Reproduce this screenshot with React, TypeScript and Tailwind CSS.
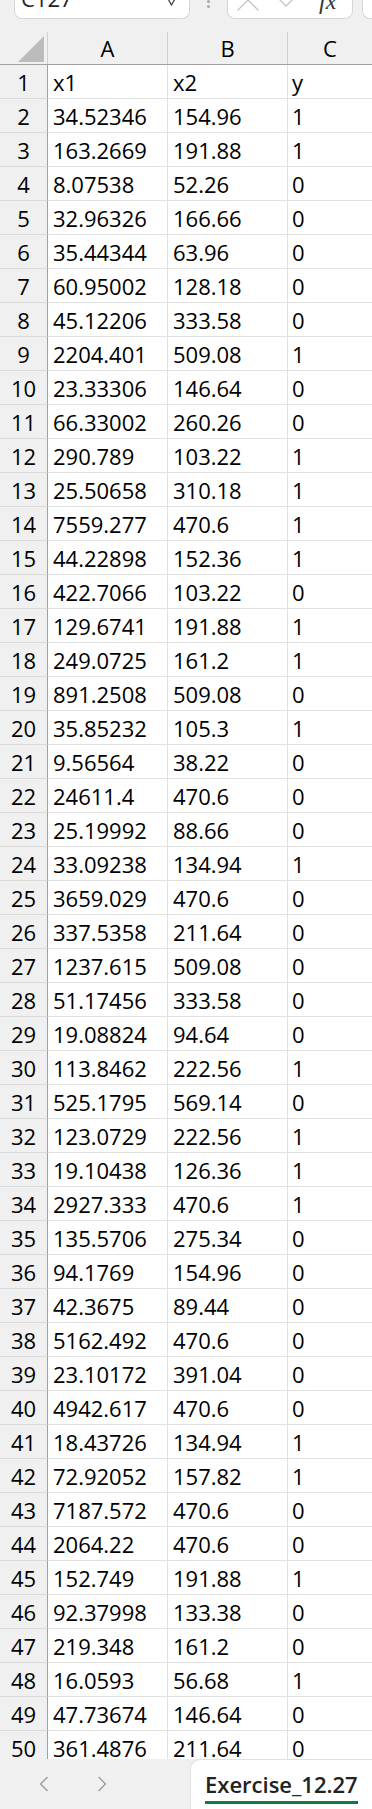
import React from 'react';

const rows: [string, string, string][] = [
  ['x1', 'x2', 'y'],
  ['34.52346', '154.96', '1'],
  ['163.2669', '191.88', '1'],
  ['8.07538', '52.26', '0'],
  ['32.96326', '166.66', '0'],
  ['35.44344', '63.96', '0'],
  ['60.95002', '128.18', '0'],
  ['45.12206', '333.58', '0'],
  ['2204.401', '509.08', '1'],
  ['23.33306', '146.64', '0'],
  ['66.33002', '260.26', '0'],
  ['290.789', '103.22', '1'],
  ['25.50658', '310.18', '1'],
  ['7559.277', '470.6', '1'],
  ['44.22898', '152.36', '1'],
  ['422.7066', '103.22', '0'],
  ['129.6741', '191.88', '1'],
  ['249.0725', '161.2', '1'],
  ['891.2508', '509.08', '0'],
  ['35.85232', '105.3', '1'],
  ['9.56564', '38.22', '0'],
  ['24611.4', '470.6', '0'],
  ['25.19992', '88.66', '0'],
  ['33.09238', '134.94', '1'],
  ['3659.029', '470.6', '0'],
  ['337.5358', '211.64', '0'],
  ['1237.615', '509.08', '0'],
  ['51.17456', '333.58', '0'],
  ['19.08824', '94.64', '0'],
  ['113.8462', '222.56', '1'],
  ['525.1795', '569.14', '0'],
  ['123.0729', '222.56', '1'],
  ['19.10438', '126.36', '1'],
  ['2927.333', '470.6', '1'],
  ['135.5706', '275.34', '0'],
  ['94.1769', '154.96', '0'],
  ['42.3675', '89.44', '0'],
  ['5162.492', '470.6', '0'],
  ['23.10172', '391.04', '0'],
  ['4942.617', '470.6', '0'],
  ['18.43726', '134.94', '1'],
  ['72.92052', '157.82', '1'],
  ['7187.572', '470.6', '0'],
  ['2064.22', '470.6', '0'],
  ['152.749', '191.88', '1'],
  ['92.37998', '133.38', '0'],
  ['219.348', '161.2', '0'],
  ['16.0593', '56.68', '1'],
  ['47.73674', '146.64', '0'],
  ['361.4876', '211.64', '0'],
];

// small stroked chevron, path given in the svg's own box
const Stroke = ({ w, h, d, className }: { w: number; h: number; d: string; className?: string }) => (
  <svg
    width={w}
    height={h}
    viewBox={`0 0 ${w} ${h}`}
    className={className}
    fill="none"
    stroke="currentColor"
    strokeWidth={1.3}
  >
    <path d={d} />
  </svg>
);

export default function App() {
  return (
    <div
      className="w-[372px] h-[1809px] flex flex-col overflow-hidden bg-[#f0f0f0] text-black"
      style={{ fontFamily: '"Open Sans", "Noto Sans", sans-serif' }}
    >
      {/* formula bar */}
      <div className="h-[32px] shrink-0 flex items-start">
        <div className="ml-[14px] w-[176px] h-[19px] bg-white border border-t-0 border-[#d6d6d6] rounded-b-[8px] flex items-start overflow-hidden pl-[6px]">
          <span className="text-[22px] leading-none text-[#222] -mt-[13px]">C127</span>
          <Stroke w={11} h={6} d="M0.5 -4 L5.5 5 L10.5 -4" className="ml-auto mr-[12px] text-[#444]" />
        </div>
        <div className="w-[37px] flex flex-col items-center gap-[2px] text-[#a0a0a0]">
          <span className="w-[3px] h-[3px] rounded-full bg-[#a8a8a8]" />
          <span className="w-[3px] h-[3px] rounded-full bg-[#a8a8a8]" />
        </div>
        <div className="w-[126px] h-[19px] bg-white border border-t-0 border-[#d6d6d6] rounded-b-[8px] flex items-start overflow-hidden pl-[9px]">
          <Stroke w={22} h={11} d="M0.5 10.5 L11 0 L21.5 10.5" className="text-[#c4c4c4]" />
          <Stroke w={20} h={7} d="M0.5 -3.5 L10 6 L19.5 -3.5" className="ml-[17px] text-[#c4c4c4]" />
          <span
            className="ml-[23px] text-[24px] italic leading-none text-[#333] -mt-[11px]"
            style={{ fontFamily: '"Liberation Serif", serif' }}
          >
            fx
          </span>
        </div>
        <div className="ml-[9px] flex-1 h-[19px] bg-white border border-t-0 border-r-0 border-[#d6d6d6] rounded-bl-[8px]" />
      </div>

      {/* column headers */}
      <div className="h-[33px] shrink-0 flex border-b border-[#a0a0a0]">
        <div className="w-[48px] shrink-0 border-r border-[#d0d0d0] flex items-end justify-start pl-[18px] pb-[2px]">
          <svg viewBox="0 0 26 26" className="w-[26px] h-[26px]">
            <polygon points="26,0 26,26 0,26" fill="#bcbcbc" />
          </svg>
        </div>
        {['A', 'B', 'C'].map((c, i) => (
          <div
            key={c}
            className={`${i === 2 ? 'flex-1' : 'w-[120px] border-r border-[#d0d0d0]'} shrink-0 flex items-center justify-center text-[22px] leading-none`}
          >
            {c}
          </div>
        ))}
      </div>

      {/* grid */}
      <div className="flex-1 overflow-hidden bg-white">
        {rows.map((r, i) => (
          <div key={i} className="h-[34px] flex text-[22px] leading-none">
            <div className="w-[48px] shrink-0 bg-[#f0f0f0] border-r border-b border-r-[#a0a0a0] border-b-[#dadada] flex items-center justify-center">
              {i + 1}
            </div>
            <div className="w-[120px] shrink-0 border-r border-b border-[#e1e1e1] flex items-center pl-[5px]">{r[0]}</div>
            <div className="w-[120px] shrink-0 border-r border-b border-[#e1e1e1] flex items-center pl-[5px]">{r[1]}</div>
            <div className="flex-1 border-b border-[#e1e1e1] flex items-center pl-[4px]">{r[2]}</div>
          </div>
        ))}
      </div>

      {/* sheet tabs */}
      <div className="h-[50px] shrink-0 flex bg-[#f0f0f0]">
        <div className="w-[190px] flex items-center pl-[39px] gap-[48px] text-[#9a9a9a]">
          <Stroke w={10} h={16} d="M8.5 1 L1.5 8 L8.5 15" />
          <Stroke w={10} h={16} d="M1.5 1 L8.5 8 L1.5 15" />
        </div>
        <div className="flex-1 bg-white rounded-tl-[10px] border-l border-t border-[#e0e0e0] pl-[14px] pt-[10px]">
          <div className="inline-flex flex-col">
            <span className="text-[22px] leading-[28px] font-semibold text-[#222]">Exercise_12.27</span>
            <span className="h-[3px] bg-[#107c41] mt-[3px]" />
          </div>
        </div>
      </div>
    </div>
  );
}
